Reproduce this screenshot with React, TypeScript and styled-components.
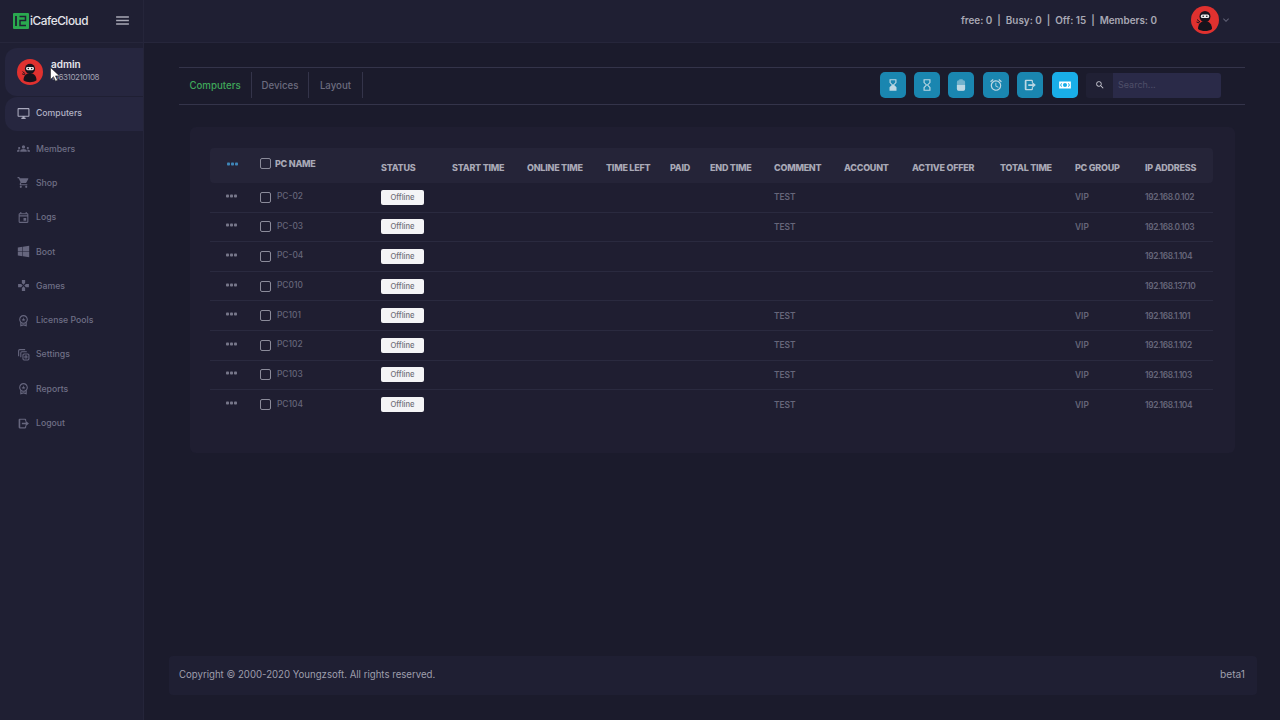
import { createGlobalStyle, styled } from "styled-components";
import {
  MdOutlineDesktopWindows,
  MdGroups,
  MdShoppingCart,
  MdOutlineEvent,
  MdGames,
  MdOutlineWorkspacePremium,
  MdHourglassBottom,
  MdHourglassEmpty,
  MdOutlineAccessAlarm,
  MdSearch,
  MdMenu,
  MdKeyboardArrowDown,
} from "react-icons/md";
import { FaWindows } from "react-icons/fa";

const GlobalStyle = createGlobalStyle`
  * { box-sizing: border-box; }
  html, body { margin: 0; padding: 0; background: #1b1b2c; }
  body { font-family: Inter, "Noto Sans", sans-serif; overflow: hidden; }
`;

const Page = styled.div`
  position: relative;
  display: grid;
  grid-template-columns: 144px 1fr;
  width: 1280px;
  height: 720px;
`;

const Sidebar = styled.aside`
  background: #1f1f33;
  border-right: 1px solid #25253a;
`;

const Brand = styled.div`
  display: flex;
  align-items: center;
  height: 43px;
  padding: 0 12px 0 13px;
  border-bottom: 1px solid #26263b;
`;

const BrandName = styled.span`
  margin-left: 1px;
  color: #e4e4ea;
  font-size: 11.8px;
  font-weight: 500;
  letter-spacing: -0.45px;
  flex: 1;
`;

const Burger = styled(MdMenu)`
  margin-bottom: 2px;
  color: #a9a9b6;
  font-size: 17px;
`;

const UserBlock = styled.div`
  display: flex;
  align-items: center;
  gap: 8px;
  height: 48px;
  margin: 5px 0 1px 5px;
  padding-left: 12px;
  background: #26263f;
  border-radius: 12px 0 0 12px;
`;

const UserText = styled.div`
  padding-bottom: 3px;
`;

const UserName = styled.div`
  color: #e6e6ec;
  font-size: 10px;
  font-weight: 600;
  line-height: 14px;
`;

const UserId = styled.div`
  color: #a2a2b2;
  font-size: 8px;
  line-height: 13px;
  letter-spacing: -0.4px;
`;

const NavItem = styled.div<{ $active?: boolean }>`
  display: flex;
  align-items: center;
  gap: 6px;
  height: ${(p) => (p.$active ? "34px" : "34.3px")};
  margin-left: 5px;
  margin-bottom: ${(p) => (p.$active ? "0.5px" : "0")};
  padding: ${(p) => (p.$active ? "0 0 2px 12px" : "0 0 0 12px")};
  color: ${(p) => (p.$active ? "#b4b4c6" : "#6f6f86")};
  font-size: 8.7px;
  font-weight: 500;
  background: ${(p) => (p.$active ? "#26263f" : "transparent")};
  border-radius: 12px 0 0 12px;

  svg {
    width: 13px;
    height: 13px;
    color: ${(p) => (p.$active ? "#a9a9bd" : "#66667e")};
  }
`;

const Main = styled.main`
  display: flex;
  flex-direction: column;
  min-width: 0;
`;

const TopBar = styled.header`
  display: flex;
  align-items: center;
  justify-content: flex-end;
  height: 43px;
  padding: 0 48px 2px 0;
  background: #1f1f33;
  border-bottom: 1px solid #26263b;
`;

const Stats = styled.div`
  margin-right: 34px;
  color: #a8a8b4;
  font-size: 9.9px;
  font-weight: 600;
  white-space: pre;
`;

const Chevron = styled(MdKeyboardArrowDown)`
  margin-left: 1px;
  color: #5f5f74;
  font-size: 12px;
`;

const Content = styled.div`
  flex: 1;
  display: flex;
  flex-direction: column;
  padding: 24px 35px 0;
`;

const TabBar = styled.div`
  display: flex;
  align-items: center;
  height: 38px;
  padding-bottom: 2px;
  border-top: 1px solid #34344a;
  border-bottom: 1px solid #34344a;
`;

const Tab = styled.div<{ $active?: boolean; $w: number }>`
  display: flex;
  align-items: center;
  justify-content: center;
  width: ${(p) => p.$w}px;
  height: 26px;
  color: ${(p) => (p.$active ? "#3fa75a" : "#6b6b7e")};
  font-size: 9.7px;
  font-weight: 500;
  border-right: 1px solid #34344a;
`;

const Actions = styled.div`
  display: flex;
  align-items: center;
  gap: 8.4px;
  margin-left: auto;
  margin-right: 24px;
`;

const ActionButton = styled.div<{ $on?: boolean }>`
  display: flex;
  align-items: center;
  justify-content: center;
  width: 26px;
  height: 26px;
  background: ${(p) => (p.$on ? "#19aee8" : "#1a86b0")};
  border-radius: 5px;

  svg {
    width: 14px;
    height: 14px;
    color: ${(p) => (p.$on ? "#fff" : "#bcd7e3")};
  }
`;

const Search = styled.div`
  display: flex;
  height: 25px;
  width: 135px;
  border-radius: 3px;
  overflow: hidden;
`;

const SearchIcon = styled.div`
  display: flex;
  align-items: center;
  justify-content: center;
  width: 27px;
  color: #c8c8d2;
  background: #202034;
  font-size: 10px;
`;

const SearchText = styled.div`
  flex: 1;
  padding-left: 5px;
  color: #4f4f68;
  background: #2a2a48;
  font-size: 9px;
  line-height: 24px;
`;

const Card = styled.section`
  margin: 22px 10px 0 11px;
  padding: 21px 22px 0 20px;
  height: 326px;
  background: #1f1e31;
  border-radius: 6px;
`;

const COLS = "50px 121px 71px 75px 79px 64px 40px 64px 70px 68px 88px 75px 70px 68px";

const HeadRow = styled.div`
  display: grid;
  grid-template-columns: ${COLS};
  height: 35px;
  background: #252438;
  border-radius: 4px;
`;

const HeadCell = styled.div<{ $raised?: boolean }>`
  display: flex;
  align-items: center;
  gap: 4px;
  padding-top: ${(p) => (p.$raised ? "0" : "3px")};
  padding-bottom: ${(p) => (p.$raised ? "5px" : "0")};
  color: #a9a9b6;
  font-size: 9px;
  font-weight: 800;
  letter-spacing: -0.25px;
  white-space: nowrap;
`;

const DotsCell = styled.div<{ $head?: boolean }>`
  display: flex;
  align-items: center;
  padding-left: ${(p) => (p.$head ? "17px" : "16px")};
  padding-bottom: 3px;
  color: ${(p) => (p.$head ? "#3f86b8" : "#77778a")};
`;

const Row = styled.div`
  display: grid;
  grid-template-columns: ${COLS};
  height: 29.6px;
  border-bottom: 1px solid #2a2a3f;

  &:last-child {
    border-bottom: 0;
  }
`;

const Cell = styled.div`
  display: flex;
  align-items: center;
  color: #66667a;
  font-size: 8.4px;
  font-weight: 600;
  white-space: nowrap;
`;

const IpCell = styled(Cell)`
  letter-spacing: -0.38px;
`;

const NameCell = styled(Cell)`
  gap: 6px;
  padding-bottom: 2px;
  font-weight: 500;
`;

const Check = styled.span<{ $head?: boolean }>`
  display: block;
  width: 11px;
  height: 11px;
  margin-top: ${(p) => (p.$head ? "0" : "2px")};
  border: 1px solid #8b8b9a;
  border-radius: 2px;
`;

const Badge = styled.span`
  display: flex;
  align-items: center;
  justify-content: center;
  width: 43px;
  height: 15px;
  color: #6f6f78;
  background: #f4f4f6;
  border-radius: 2px;
  font-size: 7.6px;
  font-weight: 500;
`;

const Footer = styled.footer`
  display: flex;
  align-items: center;
  justify-content: space-between;
  height: 39px;
  margin: auto -12px 25px -10px;
  padding: 0 12px 3px 10px;
  color: #9e9eac;
  font-size: 9.65px;
  background: #1f1f33;
  border-radius: 4px;
`;

const Version = styled.span`
  font-size: 10.2px;
`;

const Cursor = styled.svg`
  position: absolute;
  left: 50px;
  top: 67px;
  width: 10px;
  height: 15px;
`;

const PCS = [
  { name: "PC-02", comment: "TEST", group: "VIP", ip: "192.168.0.102" },
  { name: "PC-03", comment: "TEST", group: "VIP", ip: "192.168.0.103" },
  { name: "PC-04", comment: "", group: "", ip: "192.168.1.104" },
  { name: "PC010", comment: "", group: "", ip: "192.168.137.10" },
  { name: "PC101", comment: "TEST", group: "VIP", ip: "192.168.1.101" },
  { name: "PC102", comment: "TEST", group: "VIP", ip: "192.168.1.102" },
  { name: "PC103", comment: "TEST", group: "VIP", ip: "192.168.1.103" },
  { name: "PC104", comment: "TEST", group: "VIP", ip: "192.168.1.104" },
];

const HEADS = [
  "STATUS",
  "START TIME",
  "ONLINE TIME",
  "TIME LEFT",
  "PAID",
  "END TIME",
  "COMMENT",
  "ACCOUNT",
  "ACTIVE OFFER",
  "TOTAL TIME",
  "PC GROUP",
  "IP ADDRESS",
];

function Avatar({ size }: { size: number }) {
  return (
    <svg width={size} height={size} viewBox="0 0 28 28">
      <circle cx="14" cy="14" r="14" fill="#e0312f" />
      <path d="M7 23c0-5 3-8 7-8s7 3 7 8c-2 1.500-4.500 2-7 2s-5-.5-7-2z" fill="#15131c" />
      <circle cx="14" cy="10.500" r="5.500" fill="#15131c" />
      <rect x="9.800" y="8.500" width="8.400" height="3.500" rx="1.500" fill="#eceaea" />
      <circle cx="12.200" cy="10.200" r="0.800" fill="#15131c" />
      <circle cx="15.800" cy="10.200" r="0.800" fill="#15131c" />
      <path d="M6 13.500l3 2.500M5.500 16l3 1" stroke="#15131c" strokeWidth="1" />
    </svg>
  );
}

function Logo() {
  return (
    <svg width="16" height="16" viewBox="0 0 16 16">
      <rect width="16" height="16" rx="1" fill="#2aa84f" />
      <path d="M3 3v10" stroke="#1f1f33" strokeWidth="1.800" />
      <path d="M6.500 3.500h6v4h-5.500v5h6" fill="none" stroke="#1f1f33" strokeWidth="1.500" />
    </svg>
  );
}

function Dots() {
  return (
    <svg width="11" height="4" viewBox="0 0 11 4" fill="currentColor">
      <rect x="0" y="0.500" width="3" height="3" rx="0.800" />
      <rect x="4" y="0.500" width="3" height="3" rx="0.800" />
      <rect x="8" y="0.500" width="3" height="3" rx="0.800" />
    </svg>
  );
}

function LogoutIcon() {
  return (
    <svg viewBox="0 0 24 24" fill="currentColor">
      <path d="M5 3h10a2 2 0 0 1 2 2v3h-2V5H6v14h9v-3h2v3a2 2 0 0 1-2 2H5a2 2 0 0 1-2-2V5a2 2 0 0 1 2-2z" />
      <path d="M9 10.500h7V7l6 5-6 5v-3.500H9z" />
    </svg>
  );
}

function SettingsIcon() {
  return (
    <svg viewBox="0 0 24 24" fill="none" stroke="currentColor" strokeWidth="2">
      <path d="M15 3H5a2 2 0 0 0-2 2v10" />
      <path d="M18 7H9a2 2 0 0 0-2 2v8" />
      <rect x="11" y="11" width="11" height="11" rx="2" />
      <circle cx="16.500" cy="16.500" r="2" />
    </svg>
  );
}

function BatteryIcon() {
  return (
    <svg viewBox="0 0 24 24" fill="currentColor">
      <path d="M9 2h6v2h1a3 3 0 0 1 3 3v12a3 3 0 0 1-3 3H8a3 3 0 0 1-3-3V7a3 3 0 0 1 3-3h1z" opacity="0.55" />
      <path d="M5 12h14v7a3 3 0 0 1-3 3H8a3 3 0 0 1-3-3z" />
    </svg>
  );
}

function BillIcon() {
  return (
    <svg viewBox="0 0 24 24" fill="currentColor">
      <path fillRule="evenodd" d="M2 6h20v12H2zM12 8.500a3.500 3.500 0 1 0 0 7 3.500 3.500 0 0 0 0-7zM5 8.500v2a2 2 0 0 0-1 0v3a2 2 0 0 0 1 0v2h1.500a8 8 0 0 1 0-7zM17.500 8.500a8 8 0 0 1 0 7H19v-2a2 2 0 0 0 1 0v-3a2 2 0 0 0-1 0v-2z" />
    </svg>
  );
}

const NAV = [
  { label: "Members", icon: <MdGroups /> },
  { label: "Shop", icon: <MdShoppingCart /> },
  { label: "Logs", icon: <MdOutlineEvent /> },
  { label: "Boot", icon: <FaWindows /> },
  { label: "Games", icon: <MdGames /> },
  { label: "License Pools", icon: <MdOutlineWorkspacePremium /> },
  { label: "Settings", icon: <SettingsIcon /> },
  { label: "Reports", icon: <MdOutlineWorkspacePremium /> },
  { label: "Logout", icon: <LogoutIcon /> },
];

function App() {
  return (
    <Page>
      <GlobalStyle />
      <Sidebar>
        <Brand>
          <Logo />
          <BrandName>iCafeCloud</BrandName>
          <Burger />
        </Brand>
        <UserBlock>
          <Avatar size={26} />
          <UserText>
            <UserName>admin</UserName>
            <UserId>106310210108</UserId>
          </UserText>
        </UserBlock>
        <NavItem $active>
          <MdOutlineDesktopWindows />
          Computers
        </NavItem>
        {NAV.map((item) => (
          <NavItem key={item.label}>
            {item.icon}
            {item.label}
          </NavItem>
        ))}
      </Sidebar>
      <Main>
        <TopBar>
          <Stats>{"free: 0  |  Busy: 0  |  Off: 15  |  Members: 0"}</Stats>
          <Avatar size={28} />
          <Chevron />
        </TopBar>
        <Content>
          <TabBar>
            <Tab $active $w={73}>Computers</Tab>
            <Tab $w={57}>Devices</Tab>
            <Tab $w={54}>Layout</Tab>
            <Actions>
              <ActionButton><MdHourglassBottom /></ActionButton>
              <ActionButton><MdHourglassEmpty /></ActionButton>
              <ActionButton><BatteryIcon /></ActionButton>
              <ActionButton><MdOutlineAccessAlarm /></ActionButton>
              <ActionButton><LogoutIcon /></ActionButton>
              <ActionButton $on><BillIcon /></ActionButton>
              <Search>
                <SearchIcon><MdSearch /></SearchIcon>
                <SearchText>Search...</SearchText>
              </Search>
            </Actions>
          </TabBar>
          <Card>
            <HeadRow>
              <DotsCell $head><Dots /></DotsCell>
              <HeadCell $raised><Check $head />PC NAME</HeadCell>
              {HEADS.map((h) => (
                <HeadCell key={h}>{h}</HeadCell>
              ))}
            </HeadRow>
            {PCS.map((pc) => (
              <Row key={pc.name}>
                <DotsCell><Dots /></DotsCell>
                <NameCell><Check />{pc.name}</NameCell>
                <Cell><Badge>Offline</Badge></Cell>
                <Cell />
                <Cell />
                <Cell />
                <Cell />
                <Cell />
                <Cell>{pc.comment}</Cell>
                <Cell />
                <Cell />
                <Cell />
                <Cell>{pc.group}</Cell>
                <IpCell>{pc.ip}</IpCell>
              </Row>
            ))}
          </Card>
          <Footer>
            <span>Copyright © 2000-2020 Youngzsoft. All rights reserved.</span>
            <Version>beta1</Version>
          </Footer>
        </Content>
      </Main>
      <Cursor viewBox="0 0 10 15">
        <path d="M0.500 0.500v12l3-2.800 2 4.500 2-1-2-4.300h4z" fill="#fff" stroke="#222" strokeWidth="0.600" />
      </Cursor>
    </Page>
  );
}

export default App;
